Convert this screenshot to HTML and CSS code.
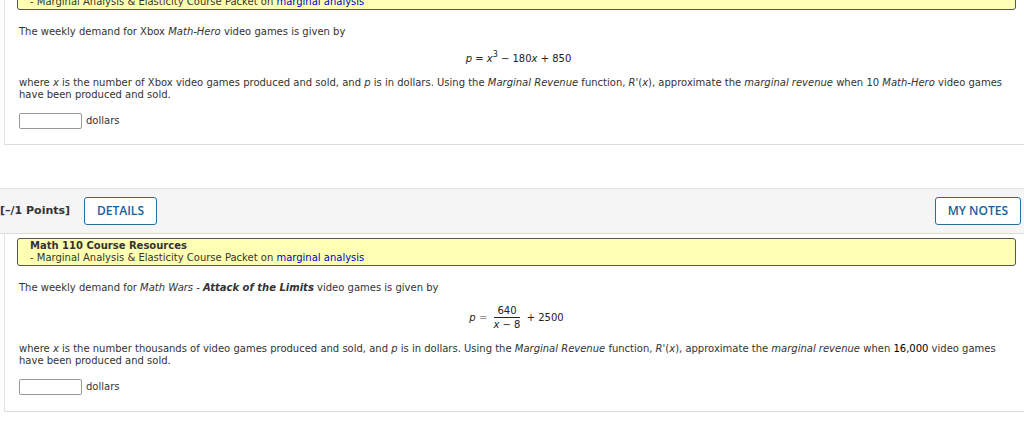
FILE: index.html
```html
<!DOCTYPE html>
<html>
<head>
<meta charset="utf-8">
<link rel="stylesheet" href="styles.css">
</head>
<body>
<div class="page">
  <div class="card card-first">
    <div class="resources">
      <div class="res-title">Math 110 Course Resources</div>
      <div>- Marginal Analysis &amp; Elasticity Course Packet on <a class="link" href="#">marginal analysis</a></div>
    </div>
    <p class="text first-text">The weekly demand for Xbox <i>Math-Hero</i> video games is given by</p>
    <div class="formula formula-line"><i>p</i> = <i>x</i><sup>3</sup> &minus; 180<i>x</i> + 850</div>
    <p class="text">where <i>x</i> is the number of Xbox video games produced and sold, and <i>p</i> is in dollars. Using the <i>Marginal Revenue</i> function, <i>R'</i>(<i>x</i>), approximate the <i>marginal revenue</i> when 10 <i>Math-Hero</i> video games have been produced and sold.</p>
    <div class="answer"><span class="box"></span><span class="unit">dollars</span></div>
  </div>

  <div class="qhead">
    <div class="qhead-left">
      <span class="points">[&ndash;/1 Points]</span>
      <span class="btn">DETAILS</span>
    </div>
    <span class="btn">MY NOTES</span>
  </div>

  <div class="card card-second">
    <div class="resources">
      <div class="res-title">Math 110 Course Resources</div>
      <div>- Marginal Analysis &amp; Elasticity Course Packet on <a class="link" href="#">marginal analysis</a></div>
    </div>
    <p class="text first-text">The weekly demand for <i>Math Wars</i> - <b><i>Attack of the Limits</i></b> video games is given by</p>
    <div class="formula formula-frac"><i>p</i> <span class="eq">=</span> <span class="frac"><span class="num">640</span><span class="den"><i>x</i> &minus; 8</span></span> + 2500</div>
    <p class="text">where <i>x</i> is the number thousands of video games produced and sold, and <i>p</i> is in dollars. Using the <i>Marginal Revenue</i> function, <i>R'</i>(<i>x</i>), approximate the <i>marginal revenue</i> when <b class="num-b">16,000</b> video games have been produced and sold.</p>
    <div class="answer"><span class="box"></span><span class="unit">dollars</span></div>
  </div>
</div>
</body>
</html>
```

FILE: styles.css
```css
html, body {
  margin: 0;
  padding: 0;
  background: #fff;
  overflow: hidden;
}
body {
  font-family: "DejaVu Sans", Verdana, sans-serif;
  font-size: 10px;
  line-height: 12px;
  color: #333;
}
.page {
  width: 1024px;
}
.card {
  margin-left: 4px;
  margin-right: -30px;
  border-left: 1px solid #e2e2e2;
  border-bottom: 1px solid #dcdcdc;
  padding: 4px 0 15px 12px;
}
.card-first {
  margin-top: -22px;
  margin-bottom: 43px;
}
.card-second {
  padding-top: 4px;
  padding-bottom: 16px;
}
.resources {
  width: 973px;
  background: #ffffb3;
  border: 1px solid #555;
  border-radius: 3px;
  padding: 1px 12px;
}
.res-title {
  font-weight: bold;
}
.link {
  color: #0000cc;
  text-decoration: none;
}
.text {
  margin: 0;
  padding-left: 2px;
  width: 985px;
}
.first-text {
  margin-top: 16px;
}
.formula {
  width: 999px;
  text-align: center;
  color: #222;
}
.formula-line {
  margin: 15px 0 12px;
  padding-left: 2px;
}
.formula sup {
  font-size: 8px;
  line-height: 0;
  vertical-align: 5px;
}
.formula-frac {
  margin: 12px 0 13px;
  height: 24px;
  line-height: 24px;
}
.eq {
  color: #999;
}
.frac {
  display: inline-flex;
  flex-direction: column;
  align-items: center;
  vertical-align: middle;
  line-height: 11px;
  margin-top: -2px;
}
.num {
  padding: 0 3px 1px;
  border-bottom: 1px solid #222;
}
.den {
  padding: 1px 3px 0;
}
.num-b {
  font-weight: normal;
  color: #000;
}
.answer {
  display: flex;
  align-items: center;
  margin-top: 12px;
  padding-left: 2px;
}
.box {
  display: inline-block;
  width: 61px;
  height: 14px;
  border: 1px solid #999;
  border-radius: 2px;
  background: #fff;
}
.unit {
  margin-left: 4px;
}
.qhead {
  height: 44px;
  background: #f5f5f5;
  border-top: 1px solid #e3e3e3;
  border-bottom: 1px solid #dcdcdc;
  display: flex;
  align-items: center;
  justify-content: space-between;
  padding-right: 3px;
}
.qhead-left {
  display: flex;
  align-items: center;
}
.points {
  font-family: "DejaVu Sans", Verdana, sans-serif;
  font-weight: bold;
  font-size: 11px;
  color: #333;
  width: 84px;
}
.btn {
  font-family: "Open Sans", sans-serif;
  font-weight: 600;
  font-size: 12px;
  color: #17609a;
  border: 1.5px solid #2a6c9c;
  border-radius: 3px;
  background: #fff;
  height: 26px;
  padding: 0 12px;
  display: inline-flex;
  align-items: center;
}
```
